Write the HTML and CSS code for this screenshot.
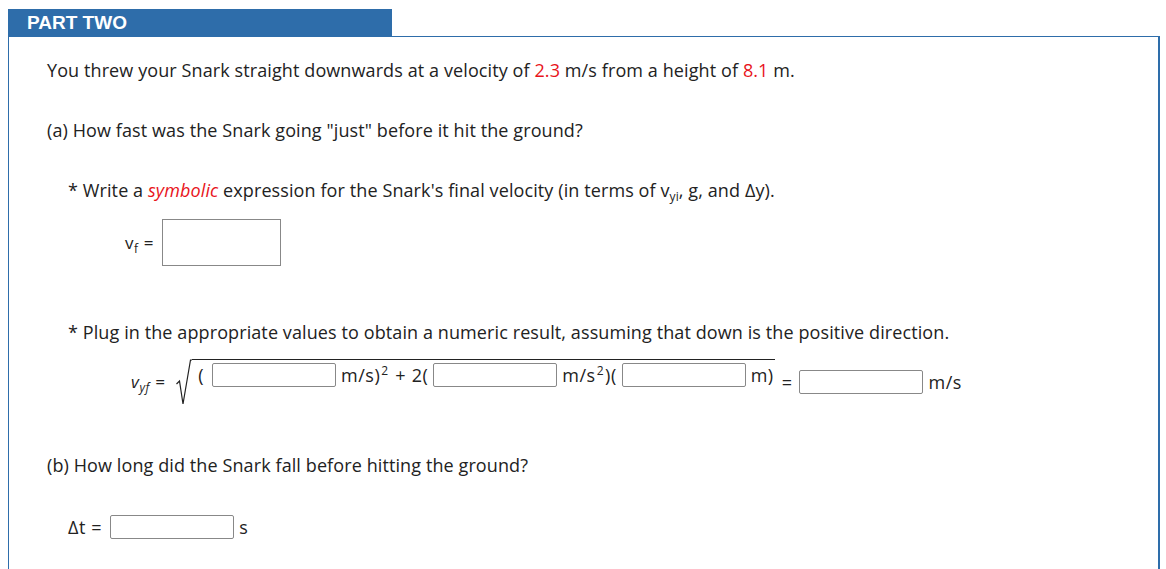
FILE: index.html
```html
<!DOCTYPE html>
<html>
<head>
<meta charset="utf-8">
<link rel="stylesheet" href="styles.css">
</head>
<body>
<div class="part">
  <div class="tab">PART TWO</div>
  <div class="box">
    <p class="intro">You threw your Snark straight downwards at a velocity of <span class="red">2.3</span> m/s from a height of <span class="red">8.1</span> m.</p>
    <p class="question">(a) How fast was the Snark going "just" before it hit the ground?</p>
    <p class="sub">* Write a <em class="red">symbolic</em> expression for the Snark's final velocity (in terms of v<sub class="s">yi</sub>, g, and &Delta;y).</p>
    <div class="eq eq-vf">
      <span class="lbl">v<sub class="s">f</sub> =</span>
      <input class="inp inp-big" type="text">
    </div>
    <p class="sub sub2">* Plug in the appropriate values to obtain a numeric result, assuming that down is the positive direction.</p>
    <div class="eq eq-sqrt">
      <span class="lbl lbl-it">v<sub class="s">yf</sub> =</span>
      <span class="sqrt">
        <svg class="rad" width="16" height="46" viewBox="0 0 16 46"><path d="M0.5 25 L3.5 22 L7 45 L14.5 1 L16 1" fill="none" stroke="#222" stroke-width="1.2"/></svg>
        <span class="radicand">
          <span class="t paren">(</span>
          <input class="inp inp-sm" type="text">
          <span class="t">m/s)<sup>2</sup> + 2(</span>
          <input class="inp inp-sm" type="text">
          <span class="t">m/s<sup>2</sup>)(</span>
          <input class="inp inp-sm" type="text">
          <span class="t">m)</span>
        </span>
      </span>
      <span class="t eqsign">=</span>
      <input class="inp inp-sm" type="text">
      <span class="t unit">m/s</span>
    </div>
    <p class="question qb">(b) How long did the Snark fall before hitting the ground?</p>
    <div class="eq eq-dt">
      <span class="lbl">&Delta;t =</span>
      <input class="inp inp-sm" type="text">
      <span class="t sunit">s</span>
    </div>
  </div>
</div>
</body>
</html>
```
FILE: styles.css
```css
html, body {
  margin: 0;
  padding: 0;
  background: #fff;
}
body {
  padding: 9px 6px 0 8px;
  font-family: "Open Sans", "Noto Sans", sans-serif;
  color: #222;
  font-size: 18px;
  letter-spacing: 0.1px;
}
.part {
  display: flex;
  flex-direction: column;
}
.tab {
  width: 384px;
  height: 27px;
  background: #2e6daa;
  color: #fff;
  font-family: "Liberation Sans", Arial, sans-serif;
  font-weight: bold;
  font-size: 19px;
  line-height: 27px;
  padding-left: 19px;
  box-sizing: border-box;
  letter-spacing: 0;
}
.box {
  border: 1px solid #2e6daa;
  border-width: 1px 2px 0 1px;
  height: 600px;
  padding: 0 0 0 38px;
}
p {
  margin: 0;
}
.red {
  color: #e8141b;
}
em.red {
  font-style: italic;
}
.intro {
  margin-top: 21px;
  line-height: 25px;
}
.question {
  margin-top: 35px;
  line-height: 25px;
}
.sub {
  margin-top: 35px;
  padding-left: 21px;
  line-height: 25px;
}
.s {
  font-size: 12px;
  vertical-align: -4px;
  line-height: 0;
}
sup {
  font-size: 12px;
  line-height: 0;
  vertical-align: 7px;
  padding: 0 1px;
}
.eq {
  display: flex;
  align-items: center;
}
.eq-vf {
  margin-top: 16px;
  padding-left: 78px;
  gap: 8px;
}
.lbl {
  font-size: 17px;
  letter-spacing: 0.6px;
}
.inp {
  border: 1px solid #888;
  box-sizing: border-box;
  margin: 0;
  padding: 0;
  background: #fff;
  font: inherit;
}
.inp-big {
  width: 119px;
  height: 47px;
}
.inp-sm {
  width: 124px;
  height: 24px;
  border-radius: 2px;
}
.sub2 {
  margin-top: 54px;
}
.eq-sqrt {
  margin-top: 14px;
  padding-left: 84px;
  align-items: flex-start;
}
.lbl-it {
  font-style: italic;
  margin-top: 11px;
  margin-right: 11px;
}
.sqrt {
  display: flex;
  align-items: flex-start;
}
.rad {
  display: block;
}
.radicand {
  display: flex;
  align-items: center;
  border-top: 1px solid #222;
  padding: 3px 1px 0 6px;
  gap: 5px;
}
.t {
  font-size: 18px;
  line-height: 24px;
  letter-spacing: 0.5px;
  word-spacing: 0.5px;
}
.paren {
  margin-right: 3px;
}
.eqsign {
  margin: 11px 7px 0 7px;
}
.eq-sqrt > .inp {
  margin-top: 11px;
}
.unit {
  margin: 11px 0 0 5px;
}
.qb {
  margin-top: 48px;
}
.eq-dt {
  margin-top: 37px;
  padding-left: 21px;
}
.eq-dt .lbl {
  font-size: 18px;
  margin-right: 8px;
}
.sunit {
  margin-left: 5px;
}
```
